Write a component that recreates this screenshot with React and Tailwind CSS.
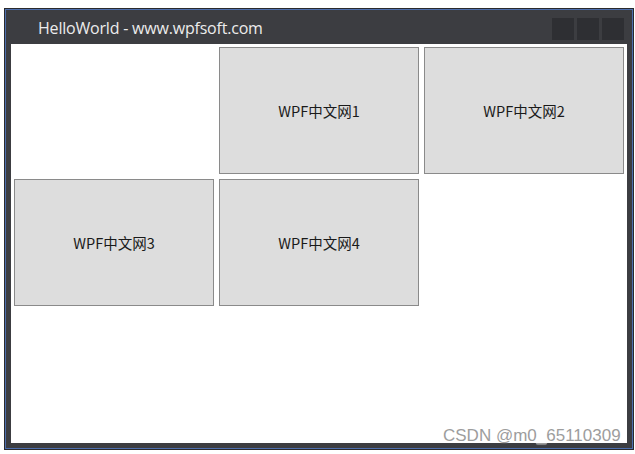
import React from "react";

function Cell({ label }) {
  return (
    <div className="h-[127px] w-[200px] flex items-center justify-center bg-[#dddddd] border-[1.5px] border-[#8a8a8a] text-[14.5px] text-[#1a1a1a] [font-family:'Noto_Sans_CJK_SC','Noto_Sans',sans-serif]">
      {label}
    </div>
  );
}

export default function App() {
  return (
    <div className="relative w-[635px] h-[454px] bg-white pt-[8px] pl-[4px] overflow-hidden">
      <div className="w-[630px] h-[442px] border border-[#2a2a2d]">
        <div className="w-full h-full border border-[#4d6fae]">
          <div className="w-full h-full bg-[#3c3d41] flex flex-col px-[5px] pb-[5px]">
            <div className="h-[34px] flex items-start shrink-0">
              <div className="pl-[27px] pt-[8px] text-[16px] leading-[20px] text-[#ececec] [font-family:'Open_Sans','Noto_Sans',sans-serif] tracking-[-0.2px]">
                HelloWorld - www.wpfsoft.com
              </div>
              <div className="ml-auto mr-[3px] mt-[8px] flex gap-[3px]">
                <div className="w-[22px] h-[22px] bg-[#2e2f33]" />
                <div className="w-[22px] h-[22px] bg-[#2e2f33]" />
                <div className="w-[22px] h-[22px] bg-[#2e2f33]" />
              </div>
            </div>
            <div className="flex-1 bg-white pl-[3px] pt-[3px]">
              <div className="grid grid-cols-[200px_200px_200px] gap-x-[5px] gap-y-[5px]">
                <div />
                <Cell label="WPF中文网1" />
                <Cell label="WPF中文网2" />
                <Cell label="WPF中文网3" />
                <Cell label="WPF中文网4" />
              </div>
            </div>
          </div>
        </div>
      </div>
      <div className="absolute left-[443px] top-[426px] text-[17px] leading-[20px] text-[#9d9d9d] [font-family:'Liberation_Sans',Arial,sans-serif] [text-shadow:0_0_1px_white]">
        CSDN @m0_65110309
      </div>
    </div>
  );
}
